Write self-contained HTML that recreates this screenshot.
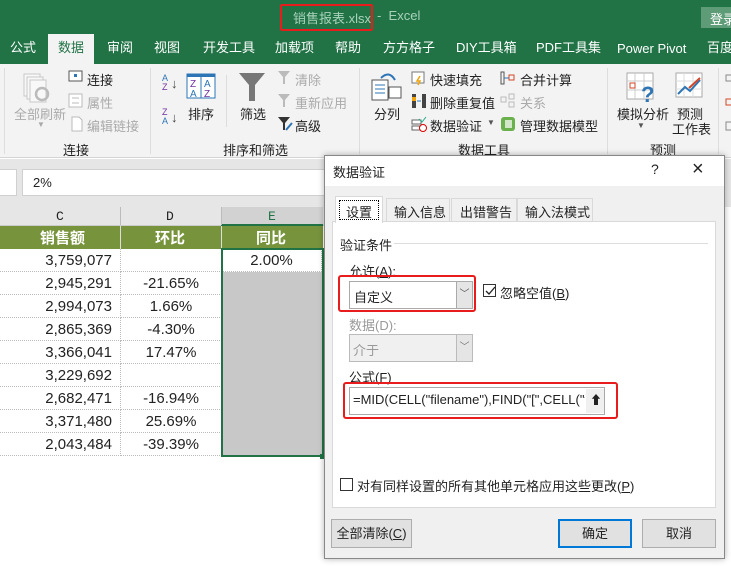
<!DOCTYPE html>
<html><head><meta charset="utf-8"><style>
*{margin:0;padding:0;box-sizing:border-box}
body{width:731px;height:566px;overflow:hidden;position:relative;background:#fff;font-family:"Liberation Sans","Noto Sans CJK SC",sans-serif;font-size:13px;color:#222}
.a{position:absolute;white-space:nowrap}
.tab{position:absolute;top:40px;height:16px;line-height:16px;color:#fff;font-size:13px;white-space:nowrap}
.rt{position:absolute;font-size:13px;color:#222;white-space:nowrap}
.dis{color:#aaa}
.cell{position:absolute;height:23px;line-height:23px;font-size:15px;border-bottom:1px dotted #bbb;border-right:1px dotted #bbb}
.ic{position:absolute}
</style></head><body>
<div class="a" style="left:0;top:0;width:731px;height:34px;background:#217346"></div>
<div class="a" style="left:293px;top:8px;color:#a9d2bb;font-size:13px">销售报表.xlsx</div>
<div class="a" style="left:377px;top:8px;color:#a9d2bb;font-size:13px">-&nbsp; Excel</div>
<div class="a" style="left:280px;top:4px;width:93px;height:27px;border:2px solid #e81c1c;border-radius:2px"></div>
<div class="a" style="left:701px;top:7px;width:40px;height:21px;background:#5e9c78;color:#fff;padding:2px 9px;font-size:13px">登录</div>
<div class="a" style="left:0;top:34px;width:731px;height:30px;background:#217346"></div>
<div class="a" style="left:48px;top:34px;width:46px;height:30px;background:#f3f3f3"></div>
<span class="tab" style="left:10px">公式</span>
<span class="tab" style="left:58px;color:#217346">数据</span>
<span class="tab" style="left:107px">审阅</span>
<span class="tab" style="left:154px">视图</span>
<span class="tab" style="left:203px">开发工具</span>
<span class="tab" style="left:275px">加载项</span>
<span class="tab" style="left:335px">帮助</span>
<span class="tab" style="left:383px">方方格子</span>
<span class="tab" style="left:456px">DIY工具箱</span>
<span class="tab" style="left:536px">PDF工具集</span>
<span class="tab" style="left:617px;top:41px">Power Pivot</span>
<span class="tab" style="left:707px">百度</span>
<div class="a" style="left:0;top:64px;width:731px;height:94px;background:#f3f3f3;border-bottom:1px solid #d5d5d5"></div>
<div class="a" style="left:4px;top:68px;width:1px;height:86px;background:#ddd"></div>
<div class="a" style="left:150px;top:68px;width:1px;height:86px;background:#ddd"></div>
<div class="a" style="left:359px;top:68px;width:1px;height:86px;background:#ddd"></div>
<div class="a" style="left:607px;top:68px;width:1px;height:86px;background:#ddd"></div>
<div class="a" style="left:718px;top:68px;width:1px;height:86px;background:#ddd"></div>
<div class="a" style="left:226px;top:75px;width:1px;height:52px;background:#ddd"></div>
<svg class="ic" style="left:22px;top:72px" width="30" height="32"><rect x="2" y="2" width="16" height="22" fill="#f8f8f8" stroke="#c8c8c8"/><rect x="5" y="5" width="16" height="22" fill="#f8f8f8" stroke="#c8c8c8"/><rect x="8" y="8" width="16" height="22" fill="#f8f8f8" stroke="#c8c8c8"/><circle cx="20" cy="22" r="6" fill="none" stroke="#bbb" stroke-width="2.5"/></svg>
<span class="rt dis" style="left:14px;top:104px">全部刷新</span>
<span class="rt dis" style="left:37px;top:120px;font-size:8px">▼</span>
<svg class="ic" style="left:68px;top:70px" width="16" height="14"><rect x="1" y="1" width="13" height="10" fill="#fff" stroke="#555"/><rect x="6" y="4" width="3" height="3" fill="#2e75b6"/></svg>
<span class="rt" style="left:87px;top:70px">连接</span>
<svg class="ic" style="left:68px;top:93px" width="16" height="16"><rect x="1" y="1" width="13" height="13" fill="#fff" stroke="#bbb"/><line x1="4" y1="5" x2="11" y2="5" stroke="#bbb"/><line x1="4" y1="10" x2="11" y2="10" stroke="#bbb"/></svg>
<span class="rt dis" style="left:87px;top:93px">属性</span>
<svg class="ic" style="left:70px;top:116px" width="16" height="16"><path d="M2 1h7l3 3v11H2z" fill="#fff" stroke="#bbb"/></svg>
<span class="rt dis" style="left:87px;top:116px">编辑链接</span>
<span class="rt" style="left:63px;top:140px">连接</span>
<span class="a" style="left:162px;top:74px;font-size:9px;line-height:9px;color:#2e75b6">A<br><span style="color:#7030a0">Z</span></span><span class="a" style="left:171px;top:76px;color:#444">↓</span>
<span class="a" style="left:162px;top:108px;font-size:9px;line-height:9px;color:#7030a0">Z<br><span style="color:#2e75b6">A</span></span><span class="a" style="left:171px;top:110px;color:#444">↓</span>
<svg class="ic" style="left:186px;top:73px" width="30" height="26"><rect x="1" y="1" width="28" height="24" fill="#fff" stroke="#2e75b6"/><rect x="1" y="1" width="28" height="3" fill="#2e75b6"/><line x1="15" y1="4" x2="15" y2="25" stroke="#2e75b6"/><text x="4" y="14" font-size="10" fill="#7030a0">Z</text><text x="18" y="14" font-size="10" fill="#2e75b6">A</text><text x="4" y="24" font-size="10" fill="#2e75b6">A</text><text x="18" y="24" font-size="10" fill="#7030a0">Z</text></svg>
<span class="rt" style="left:188px;top:104px">排序</span>
<svg class="ic" style="left:238px;top:72px" width="28" height="30"><path d="M1 1h26L17 13v16h-6V13z" fill="#777"/></svg>
<span class="rt" style="left:240px;top:104px">筛选</span>
<svg class="ic" style="left:277px;top:70px" width="16" height="16"><path d="M1 1h12L8 7v7H6V7z" fill="#bbb"/></svg>
<span class="rt dis" style="left:295px;top:70px">清除</span>
<svg class="ic" style="left:277px;top:93px" width="16" height="16"><path d="M1 1h12L8 7v7H6V7z" fill="#bbb"/></svg>
<span class="rt dis" style="left:295px;top:93px">重新应用</span>
<svg class="ic" style="left:277px;top:116px" width="16" height="16"><path d="M1 1h12L8 7v7H6V7z" fill="#333"/><line x1="9" y1="14" x2="15" y2="7" stroke="#2e75b6" stroke-width="2"/></svg>
<span class="rt" style="left:295px;top:116px">高级</span>
<span class="rt" style="left:223px;top:140px">排序和筛选</span>
<svg class="ic" style="left:371px;top:72px" width="32" height="30"><rect x="1" y="8" width="16" height="20" fill="#fff" stroke="#555"/><line x1="4" y1="13" x2="14" y2="13" stroke="#2e75b6"/><line x1="4" y1="17" x2="14" y2="17" stroke="#2e75b6"/><line x1="4" y1="21" x2="14" y2="21" stroke="#2e75b6"/><rect x="18" y="15" width="12" height="11" fill="#fff" stroke="#555"/><path d="M10 6 Q18 -2 24 8" fill="none" stroke="#2e75b6" stroke-width="2"/></svg>
<span class="rt" style="left:374px;top:104px">分列</span>
<svg class="ic" style="left:411px;top:70px" width="16" height="16"><rect x="1" y="2" width="12" height="11" fill="#fff" stroke="#777"/><path d="M9 6l-3 5h3l-2 4" stroke="#f0a30a" fill="none" stroke-width="1.5"/></svg>
<span class="rt" style="left:430px;top:70px">快速填充</span>
<svg class="ic" style="left:411px;top:93px" width="16" height="16"><rect x="1" y="1" width="4" height="14" fill="#444"/><rect x="11" y="1" width="4" height="14" fill="#444"/><rect x="1" y="4" width="4" height="4" fill="#f0a30a"/><path d="M6 8h4" stroke="#2e75b6"/></svg>
<span class="rt" style="left:430px;top:93px">删除重复值</span>
<svg class="ic" style="left:411px;top:116px" width="16" height="16"><rect x="1" y="4" width="9" height="4" fill="#fff" stroke="#666"/><rect x="1" y="10" width="9" height="4" fill="#fff" stroke="#666"/><circle cx="12" cy="12" r="3.5" fill="#fff" stroke="#d00"/><path d="M8 3l3 3 4-5" stroke="#2a8" fill="none"/></svg>
<span class="rt" style="left:430px;top:116px">数据验证</span>
<span class="rt" style="left:487px;top:118px;font-size:8px;color:#555">▼</span>
<svg class="ic" style="left:500px;top:70px" width="16" height="16"><rect x="1" y="2" width="3" height="12" fill="none" stroke="#555"/><rect x="9" y="5" width="5" height="5" fill="none" stroke="#d24726"/><line x1="4" y1="8" x2="9" y2="8" stroke="#2e75b6"/></svg>
<span class="rt" style="left:520px;top:70px">合并计算</span>
<svg class="ic" style="left:500px;top:93px" width="16" height="16"><rect x="1" y="4" width="5" height="5" fill="none" stroke="#bbb"/><rect x="9" y="1" width="5" height="5" fill="none" stroke="#bbb"/><rect x="9" y="9" width="5" height="5" fill="none" stroke="#bbb"/></svg>
<span class="rt dis" style="left:520px;top:93px">关系</span>
<svg class="ic" style="left:500px;top:115px" width="16" height="18"><rect x="1" y="2" width="14" height="14" rx="3" fill="#6ab04c"/><rect x="5" y="5" width="7" height="8" fill="#fff" opacity=".7"/></svg>
<span class="rt" style="left:520px;top:116px">管理数据模型</span>
<span class="rt" style="left:458px;top:140px">数据工具</span>
<svg class="ic" style="left:626px;top:72px" width="32" height="32"><rect x="1" y="1" width="26" height="26" fill="#fff" stroke="#aaa"/><path d="M1 9h26M1 18h26M9 1v26M18 1v26" stroke="#ccc"/><rect x="4" y="11" width="5" height="5" fill="none" stroke="#d24726"/><text x="15" y="30" font-size="22" font-weight="bold" fill="#2e75b6">?</text></svg>
<span class="rt" style="left:617px;top:104px">模拟分析</span>
<span class="rt" style="left:637px;top:121px;font-size:8px;color:#555">▼</span>
<svg class="ic" style="left:675px;top:72px" width="30" height="30"><rect x="1" y="1" width="26" height="24" fill="#fff" stroke="#aaa"/><path d="M1 9h26M1 17h26M9 1v24M18 1v24" stroke="#ddd"/><path d="M3 22l7-7 5 4 10-11" stroke="#2e75b6" stroke-width="2" fill="none"/><path d="M14 16l11-10" stroke="#d24726" stroke-width="2"/></svg>
<span class="rt" style="left:677px;top:104px">预测</span>
<span class="rt" style="left:672px;top:119px">工作表</span>
<span class="rt" style="left:650px;top:140px">预测</span>
<svg class="ic" style="left:724px;top:73px" width="8" height="60"><rect x="2" y="2" width="6" height="6" fill="none" stroke="#888"/><rect x="2" y="26" width="6" height="6" fill="none" stroke="#d24726"/><rect x="2" y="49" width="6" height="8" fill="none" stroke="#888"/></svg>
<div class="a" style="left:0;top:159px;width:731px;height:48px;background:#e6e6e6"></div>
<div class="a" style="left:-4px;top:169px;width:21px;height:27px;background:#fff;border:1px solid #d0d0d0"></div>
<div class="a" style="left:22px;top:169px;width:320px;height:27px;background:#fff;border:1px solid #d0d0d0"></div>
<span class="a" style="left:33px;top:175px;font-size:13px">2%</span>
<div class="a" style="left:0;top:207px;width:331px;height:19px;background:#e6e6e6;border-bottom:1px solid #ccc"></div>
<div class="a" style="left:221px;top:207px;width:102px;height:19px;background:#d2d2d2;border-bottom:2px solid #217346"></div>
<div class="a" style="left:120px;top:207px;width:1px;height:18px;background:#bbb"></div>
<div class="a" style="left:221px;top:207px;width:1px;height:18px;background:#bbb"></div>
<span class="a" style="left:56px;top:209px;font-family:'Liberation Mono',monospace;font-size:13px">C</span>
<span class="a" style="left:166px;top:209px;font-family:'Liberation Mono',monospace;font-size:13px">D</span>
<span class="a" style="left:268px;top:209px;font-family:'Liberation Mono',monospace;font-size:13px;color:#217346">E</span>
<div class="a" style="left:0;top:226px;width:323px;height:23px;background:#77933c"></div>
<div class="a" style="left:120px;top:226px;width:1px;height:23px;background:#ddd"></div>
<div class="a" style="left:221px;top:226px;width:1px;height:23px;background:#ddd"></div>
<span class="a" style="left:40px;top:227px;color:#fff;font-weight:bold;font-size:15px">销售额</span>
<span class="a" style="left:155px;top:227px;color:#fff;font-weight:bold;font-size:15px">环比</span>
<span class="a" style="left:256px;top:227px;color:#fff;font-weight:bold;font-size:15px">同比</span>
<div class="a" style="left:222px;top:272px;width:100px;height:184px;background:#c8c8c8"></div>
<div class="cell" style="left:0;top:249px;width:121px;text-align:right;padding-right:8px">3,759,077</div><div class="cell" style="left:121px;top:249px;width:101px;text-align:center"></div><div class="cell" style="left:222px;top:249px;width:100px;text-align:center">2.00%</div>
<div class="cell" style="left:0;top:272px;width:121px;text-align:right;padding-right:8px">2,945,291</div><div class="cell" style="left:121px;top:272px;width:101px;text-align:center">-21.65%</div>
<div class="cell" style="left:0;top:295px;width:121px;text-align:right;padding-right:8px">2,994,073</div><div class="cell" style="left:121px;top:295px;width:101px;text-align:center">1.66%</div>
<div class="cell" style="left:0;top:318px;width:121px;text-align:right;padding-right:8px">2,865,369</div><div class="cell" style="left:121px;top:318px;width:101px;text-align:center">-4.30%</div>
<div class="cell" style="left:0;top:341px;width:121px;text-align:right;padding-right:8px">3,366,041</div><div class="cell" style="left:121px;top:341px;width:101px;text-align:center">17.47%</div>
<div class="cell" style="left:0;top:364px;width:121px;text-align:right;padding-right:8px">3,229,692</div><div class="cell" style="left:121px;top:364px;width:101px;text-align:center"></div>
<div class="cell" style="left:0;top:387px;width:121px;text-align:right;padding-right:8px">2,682,471</div><div class="cell" style="left:121px;top:387px;width:101px;text-align:center">-16.94%</div>
<div class="cell" style="left:0;top:410px;width:121px;text-align:right;padding-right:8px">3,371,480</div><div class="cell" style="left:121px;top:410px;width:101px;text-align:center">25.69%</div>
<div class="cell" style="left:0;top:433px;width:121px;text-align:right;padding-right:8px">2,043,484</div><div class="cell" style="left:121px;top:433px;width:101px;text-align:center">-39.39%</div>
<div class="a" style="left:221px;top:248px;width:103px;height:209px;border:2px solid #217346"></div>
<div class="a" style="left:320px;top:454px;width:5px;height:5px;background:#217346"></div>
<div class="a" style="left:324px;top:155px;width:401px;height:404px;background:#f0f0f0;border:1px solid #888;box-shadow:0 0 6px rgba(0,0,0,.3)"></div>
<div class="a" style="left:325px;top:156px;width:399px;height:30px;background:#fff"></div>
<span class="a" style="left:333px;top:162px;font-size:13px">数据验证</span>
<span class="a" style="left:651px;top:161px;font-size:14px">?</span>
<span class="a" style="left:692px;top:158px;font-size:20px;font-weight:300">×</span>
<div class="a" style="left:332px;top:221px;width:384px;height:287px;background:#fff;border:1px solid #d9d9d9"></div>
<div class="a" style="left:335px;top:196px;width:48px;height:27px;background:#fff;border:1px solid #d9d9d9;border-bottom:none"></div>
<div class="a" style="left:339px;top:200px;width:40px;height:20px;border:1px dotted #000"></div>
<span class="a" style="left:346px;top:202px">设置</span>
<div class="a" style="left:386px;top:198px;width:64px;height:23px;background:#f0f0f0;border:1px solid #d9d9d9;border-bottom:none"></div>
<span class="a" style="left:394px;top:202px">输入信息</span>
<div class="a" style="left:451px;top:198px;width:66px;height:23px;background:#f0f0f0;border:1px solid #d9d9d9;border-bottom:none"></div>
<span class="a" style="left:460px;top:202px">出错警告</span>
<div class="a" style="left:517px;top:198px;width:76px;height:23px;background:#f0f0f0;border:1px solid #d9d9d9;border-bottom:none"></div>
<span class="a" style="left:525px;top:202px">输入法模式</span>
<span class="a" style="left:340px;top:235px">验证条件</span>
<div class="a" style="left:394px;top:243px;width:314px;height:1px;background:#ddd"></div>
<span class="a" style="left:349px;top:261px">允许(<u>A</u>):</span>
<div class="a" style="left:349px;top:281px;width:124px;height:28px;background:#fff;border:1px solid #aaa"></div>
<div class="a" style="left:456px;top:282px;width:16px;height:26px;background:#e5e5e5;border-left:1px solid #aaa;color:#555;font-size:10px;text-align:center;line-height:26px">﹀</div>
<span class="a" style="left:354px;top:287px">自定义</span>
<div class="a" style="left:338px;top:275px;width:138px;height:37px;border:2px solid #e81c1c;border-radius:3px"></div>
<div class="a" style="left:483px;top:284px;width:13px;height:13px;border:1px solid #333;background:#fff"></div>
<svg class="ic" style="left:484px;top:285px" width="12" height="12"><path d="M2 6l3 3 6-7" stroke="#222" stroke-width="1.3" fill="none"/></svg>
<span class="a" style="left:500px;top:283px">忽略空值(<u>B</u>)</span>
<span class="a dis" style="left:349px;top:315px;color:#999">数据(D):</span>
<div class="a" style="left:349px;top:334px;width:124px;height:28px;background:#f0f0f0;border:1px solid #bbb"></div>
<div class="a" style="left:456px;top:335px;width:16px;height:26px;background:#e5e5e5;border-left:1px solid #bbb;color:#777;font-size:10px;text-align:center;line-height:26px">﹀</div>
<span class="a" style="left:353px;top:340px;color:#999">介于</span>
<span class="a" style="left:349px;top:367px">公式(<u>F</u>)</span>
<div class="a" style="left:349px;top:387px;width:256px;height:28px;background:#fff;border:1px solid #aaa"></div>
<span class="a" style="left:353px;top:392px;font-size:13px;width:232px;overflow:hidden">=MID(CELL("filename"),FIND("[",CELL("fi</span>
<div class="a" style="left:586px;top:389px;width:18px;height:24px;background:#f0f0f0"></div>
<span class="a" style="left:590px;top:391px;font-size:12px;font-weight:bold">⬆</span>
<div class="a" style="left:343px;top:382px;width:275px;height:37px;border:2px solid #e81c1c;border-radius:3px"></div>
<div class="a" style="left:340px;top:478px;width:13px;height:13px;border:1px solid #333;background:#fff"></div>
<span class="a" style="left:357px;top:476px">对有同样设置的所有其他单元格应用这些更改(<u>P</u>)</span>
<div class="a" style="left:331px;top:519px;width:81px;height:29px;background:#e1e1e1;border:1px solid #adadad;text-align:center;line-height:27px">全部清除(<u>C</u>)</div>
<div class="a" style="left:558px;top:519px;width:74px;height:29px;background:#e1e1e1;border:2px solid #0078d7;text-align:center;line-height:25px">确定</div>
<div class="a" style="left:642px;top:519px;width:74px;height:29px;background:#e1e1e1;border:1px solid #adadad;text-align:center;line-height:27px">取消</div>
</body></html>
